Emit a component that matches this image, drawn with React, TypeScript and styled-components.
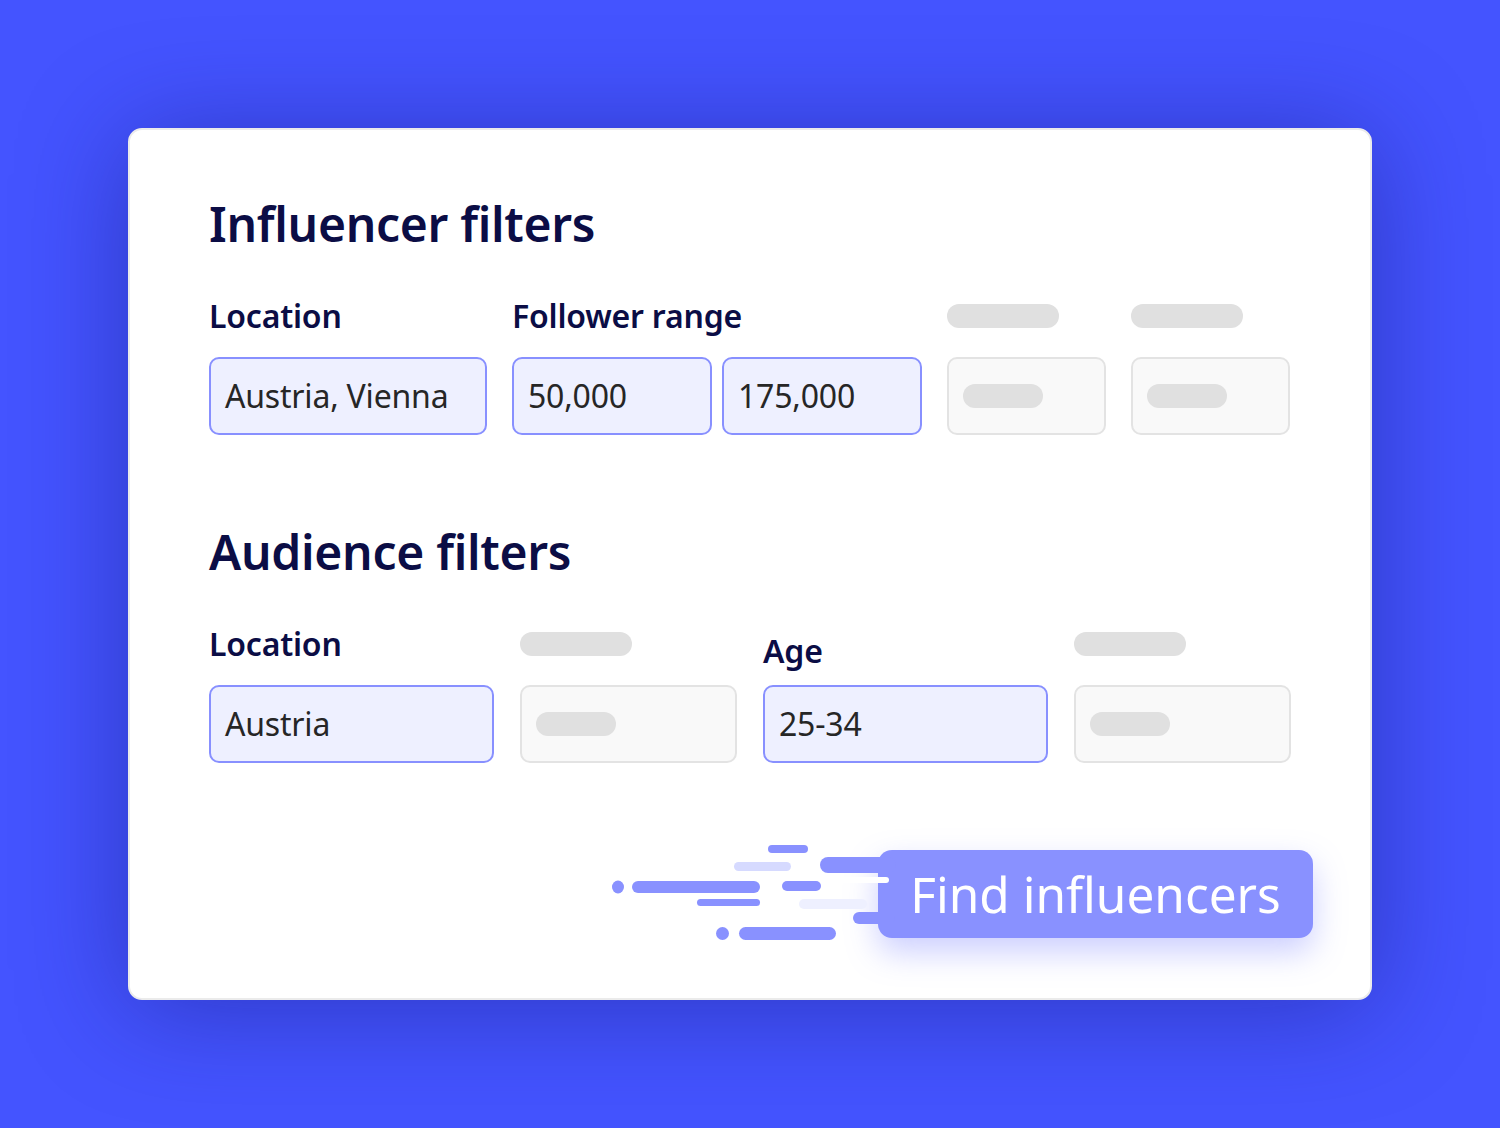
import React from "react";
import styled, { createGlobalStyle } from "styled-components";

const GlobalStyle = createGlobalStyle`
  html, body { margin: 0; padding: 0; }
  body {
    background: #4454ff;
    font-family: "Noto Sans", "Open Sans", "Liberation Sans", sans-serif;
  }
  * { box-sizing: border-box; }
`;

const Page = styled.div`
  width: 1500px;
  height: 1128px;
  display: flex;
  align-items: center;
  justify-content: center;
  background: #4454ff;
`;

const Card = styled.div`
  width: 1244px;
  height: 872px;
  background: #ffffff;
  border: 2px solid #ebebeb;
  border-radius: 14px;
  box-shadow: 0 8px 110px rgba(18, 22, 120, 0.45);
  padding: 64px 79px 0 79px;
  display: flex;
  flex-direction: column;
`;

const SectionTitle = styled.h2<{ $top?: number }>`
  margin: ${(p) => p.$top ?? 0}px 0 0 0;
  font-size: 48px;
  line-height: 60px;
  font-weight: 600;
  color: #0b0d45;
  letter-spacing: -0.3px;
`;

const FieldRow = styled.div<{ $cols: string; $gap: number }>`
  margin-top: 42px;
  display: grid;
  grid-template-columns: ${(p) => p.$cols};
  column-gap: ${(p) => p.$gap}px;
`;

const Field = styled.div`
  display: flex;
  flex-direction: column;
  gap: 21px;
`;

const Label = styled.div<{ $shift?: number }>`
  height: 40px;
  font-size: 32px;
  line-height: 40px;
  font-weight: 600;
  color: #0b0d45;
  letter-spacing: -0.2px;
  white-space: nowrap;
  padding-top: ${(p) => p.$shift ?? 0}px;
`;

const LabelPill = styled.div`
  width: 112px;
  height: 24px;
  margin-top: 8px;
  border-radius: 12px;
  background: #e0e0e0;
`;

const LabelSlot = styled.div`
  height: 40px;
`;

const InputBox = styled.div`
  height: 78px;
  border: 2px solid #8890ff;
  border-radius: 10px;
  background: #eef0ff;
  padding: 0 14px;
  display: flex;
  align-items: center;
  font-size: 32px;
  line-height: 40px;
  letter-spacing: -0.2px;
  color: #262626;
  white-space: nowrap;
`;

const EmptyBox = styled.div`
  height: 78px;
  border: 2px solid #e3e3e3;
  border-radius: 10px;
  background: #f9f9f9;
  padding: 0 14px;
  display: flex;
  align-items: center;
`;

const BoxPill = styled.div`
  width: 80px;
  height: 24px;
  border-radius: 12px;
  background: #e0e0e0;
`;

const InputPair = styled.div`
  display: grid;
  grid-template-columns: 1fr 1fr;
  column-gap: 10px;
`;

const ActionRow = styled.div`
  margin-top: 87px;
  margin-right: -22px;
  display: flex;
  justify-content: flex-end;
`;

const ButtonWrap = styled.div`
  position: relative;
  display: inline-flex;
`;

const FindButton = styled.button`
  height: 88px;
  width: 435px;
  padding: 0;
  border: none;
  border-radius: 14px;
  background: #8991ff;
  color: #ffffff;
  font-family: "Noto Sans", "Open Sans", sans-serif;
  font-size: 49.5px;
  font-weight: 400;
  line-height: 60px;
  box-shadow: 0 14px 32px rgba(120, 130, 255, 0.38);
  white-space: nowrap;
  display: flex;
  align-items: center;
  justify-content: center;
`;

const SpeedLines = styled.svg`
  position: absolute;
  left: -268px;
  top: -7px;
  width: 290px;
  height: 100px;
  overflow: visible;
  pointer-events: none;
`;

const BLUE = "#8991ff";

type Bar = { x: number; y: number; w: number; h: number; c: string };

const bars: Bar[] = [
  { x: 158, y: 2, w: 40, h: 8, c: BLUE },
  { x: 124, y: 19, w: 57, h: 9, c: "#d6daff" },
  { x: 210, y: 14, w: 76, h: 16, c: BLUE },
  { x: 22, y: 38, w: 128, h: 12, c: BLUE },
  { x: 172, y: 38, w: 39, h: 10, c: BLUE },
  { x: 87, y: 56, w: 63, h: 7, c: BLUE },
  { x: 189, y: 56, w: 68, h: 10, c: "#eef0ff" },
  { x: 243, y: 69, w: 42, h: 12, c: BLUE },
  { x: 129, y: 84, w: 97, h: 13, c: BLUE },
  { x: 229, y: 34, w: 50, h: 6, c: "#ffffff" },
];

export default function App() {
  return (
    <>
      <GlobalStyle />
      <Page>
        <Card>
          <SectionTitle>Influencer filters</SectionTitle>
          <FieldRow $cols="278px 410px 159px 159px" $gap={25}>
            <Field>
              <Label>Location</Label>
              <InputBox>Austria, Vienna</InputBox>
            </Field>
            <Field>
              <Label>Follower range</Label>
              <InputPair>
                <InputBox>50,000</InputBox>
                <InputBox>175,000</InputBox>
              </InputPair>
            </Field>
            <Field>
              <LabelSlot>
                <LabelPill />
              </LabelSlot>
              <EmptyBox>
                <BoxPill />
              </EmptyBox>
            </Field>
            <Field>
              <LabelSlot>
                <LabelPill />
              </LabelSlot>
              <EmptyBox>
                <BoxPill />
              </EmptyBox>
            </Field>
          </FieldRow>

          <SectionTitle $top={87}>Audience filters</SectionTitle>
          <FieldRow $cols="285px 217px 285px 217px" $gap={26}>
            <Field>
              <Label>Location</Label>
              <InputBox>Austria</InputBox>
            </Field>
            <Field>
              <LabelSlot>
                <LabelPill />
              </LabelSlot>
              <EmptyBox>
                <BoxPill />
              </EmptyBox>
            </Field>
            <Field>
              <Label $shift={7}>Age</Label>
              <InputBox>25-34</InputBox>
            </Field>
            <Field>
              <LabelSlot>
                <LabelPill />
              </LabelSlot>
              <EmptyBox>
                <BoxPill />
              </EmptyBox>
            </Field>
          </FieldRow>

          <ActionRow>
            <ButtonWrap>
              <FindButton>Find influencers</FindButton>
              <SpeedLines viewBox="0 0 290 100">
                <ellipse cx={8} cy={44} rx={6} ry={6.5} fill={BLUE} />
                <ellipse cx={112.5} cy={90.5} rx={6.5} ry={6.5} fill={BLUE} />
                {bars.map((b, i) => (
                  <rect
                    key={i}
                    x={b.x}
                    y={b.y}
                    width={b.w}
                    height={b.h}
                    rx={b.h / 2}
                    fill={b.c}
                  />
                ))}
              </SpeedLines>
            </ButtonWrap>
          </ActionRow>
        </Card>
      </Page>
    </>
  );
}
